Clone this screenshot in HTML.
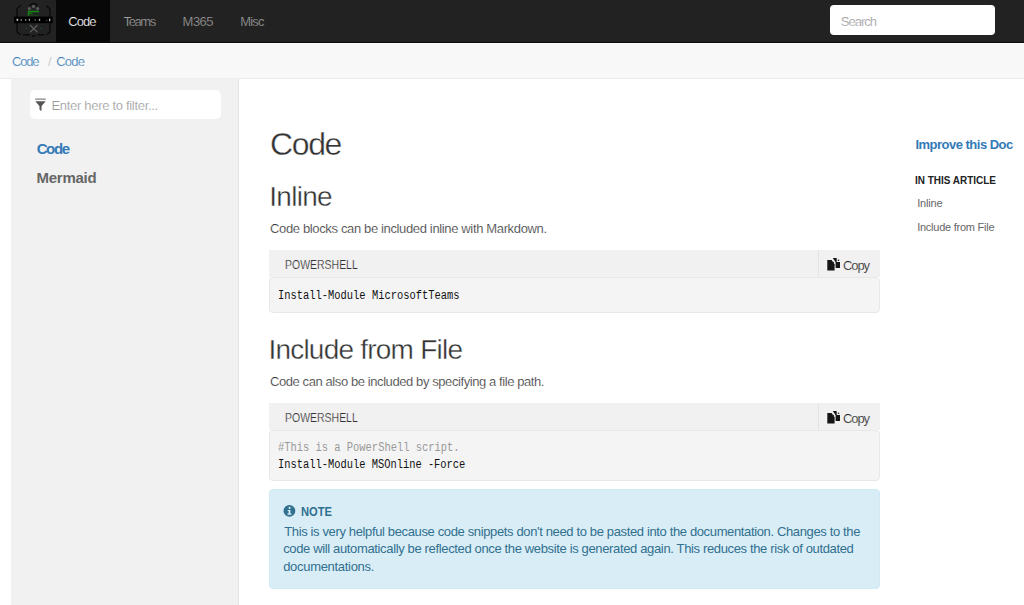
<!DOCTYPE html>
<html><head><meta charset="utf-8"><title>Code</title>
<style>
*{margin:0;padding:0;box-sizing:border-box}
html,body{width:1024px;height:605px;overflow:hidden;background:#fff;font-family:"Liberation Sans",sans-serif;color:#333}
.t{position:absolute;white-space:nowrap;line-height:1}
#nav{position:absolute;left:0;top:0;width:1024px;height:43px;background:#222;border-bottom:1px solid #080808}
#active{position:absolute;left:56px;top:0;width:54px;height:42px;background:#080808}
#search{position:absolute;left:830px;top:5px;width:165px;height:30px;background:#fff;border-radius:4px}
#crumb{position:absolute;left:0;top:44px;width:1024px;height:34px;background:#f8f8f8}
#side{position:absolute;left:11px;top:78px;width:228px;height:527px;background:#f1f1f1;border-right:1px solid #e4e4e4}
#filter{position:absolute;left:30px;top:90px;width:191px;height:29px;background:#fff;border-radius:5px}
.ch{position:absolute;left:269px;width:611px;height:27px;background:#f1f1f1}
.cpsep{position:absolute;left:818px;width:1px;height:27px;background:#e4e4e4}
.pre{position:absolute;left:269px;width:611px;background:#f4f4f4;border:1px solid #e8e8e8;border-radius:4px}
#alert{position:absolute;left:269px;top:489px;width:611px;height:100px;background:#d9edf7;border:1px solid #cfeaf4;border-radius:4px}
</style></head>
<body>
<div id="nav">
  <div id="active"></div>
</div>
<svg style="position:absolute;left:10px;top:0" width="48" height="42" viewBox="0 0 48 42">
  <path d="M10.7 5.2 L7 9 L7 30.5 Q7 33.5 10.7 34.3 M36.3 5.5 L40 9 L40 30.5 Q40 33.5 36.5 34.3" stroke="#0b0b0b" stroke-width="1.4" fill="none"/>
  <path d="M13 34.8 L20 34.8 M27.5 34.8 L34.5 34.8 M22 36 L25 36" stroke="#0b0b0b" stroke-width="1.4" fill="none"/>
  <path d="M19.5 5.8 Q23.5 1.2 27.5 5.8" stroke="#0b0b0b" stroke-width="1.4" fill="none"/>
  <circle cx="19.4" cy="8.6" r="1.6" fill="#5a5a5a"/><circle cx="23.5" cy="6.4" r="1.6" fill="#5a5a5a"/><circle cx="27.6" cy="8.6" r="1.6" fill="#5a5a5a"/>
  <path d="M18.5 16 L18.5 11.5 L29 11.5" stroke="#158a15" stroke-width="1.3" fill="none"/>
  <path d="M18.5 13.4 L22.5 13.4" stroke="#137a13" stroke-width="1.1" fill="none"/>
  <path d="M18.5 15.3 L29 15.3" stroke="#1d4d1d" stroke-width="0.9" fill="none"/>
  <rect x="4.1" y="16.6" width="38.5" height="6.6" fill="#000"/>
  <rect x="6.6" y="18.8" width="1.6" height="2" fill="#ccc"/>
  <rect x="10.6" y="19" width="1.4" height="1.8" fill="#777"/>
  <rect x="14.9" y="19" width="1.4" height="1.8" fill="#777"/>
  <rect x="18.8" y="18.8" width="1.2" height="2" fill="#aaa"/>
  <rect x="24.6" y="19" width="1.2" height="1.8" fill="#666"/>
  <rect x="28.8" y="18.8" width="1.4" height="2" fill="#aaa"/>
  <rect x="36" y="20" width="1.2" height="1" fill="#555"/>
  <rect x="39.1" y="18.6" width="1.2" height="2.6" fill="#ccc"/>
  <path d="M20 25 L27.5 32.4 M27.5 25 L20 32.4" stroke="#5f5f5f" stroke-width="1.2"/>
  <path d="M15.8 28.5 L17.2 28.5 M30.3 28.5 L31.7 28.5" stroke="#1d5a1d" stroke-width="0.9"/>
</svg>
<div id="search"></div>
<div id="crumb"></div>
<div id="side"></div>
<div style="position:absolute;left:0;top:78px;width:1024px;height:1px;background:#ededed"></div>
<div id="filter"></div>
<svg style="position:absolute;left:35px;top:98px" width="11" height="14" viewBox="0 0 11 14">
  <rect x="0.2" y="0.6" width="10.6" height="1" fill="#666"/>
  <path d="M0.3 3.2 L10.7 3.2 L6.6 8 L6.4 13.2 L4.6 11.8 L4.4 8 Z" fill="#555"/>
</svg>
<div class="ch" style="top:250px"></div>
<div class="cpsep" style="top:250px"></div>
<svg style="position:absolute;left:824px;top:254px" width="20" height="20" viewBox="0 0 20 20">
  <path d="M3.3 6 L7.6 6 L10.6 10.2 L10.6 16.5 L3.3 16.5 Z" fill="#151515"/>
  <path d="M8.8 4 L12.7 4 L12.7 8 L16 8 L16 14 L11.6 14 L11.6 8.3 Z" fill="#151515"/>
  <circle cx="9.4" cy="8.4" r="0.7" fill="#333"/>
  <circle cx="14.5" cy="6.3" r="0.8" fill="#151515"/>
</svg>
<div class="pre" style="top:277px;height:36px"></div>
<div class="ch" style="top:403px"></div>
<div class="cpsep" style="top:403px"></div>
<svg style="position:absolute;left:824px;top:407px" width="20" height="20" viewBox="0 0 20 20">
  <path d="M3.3 6 L7.6 6 L10.6 10.2 L10.6 16.5 L3.3 16.5 Z" fill="#151515"/>
  <path d="M8.8 4 L12.7 4 L12.7 8 L16 8 L16 14 L11.6 14 L11.6 8.3 Z" fill="#151515"/>
  <circle cx="9.4" cy="8.4" r="0.7" fill="#333"/>
  <circle cx="14.5" cy="6.3" r="0.8" fill="#151515"/>
</svg>
<div class="pre" style="top:430px;height:51px"></div>
<div id="alert"></div>
<svg style="position:absolute;left:283px;top:505px" width="13" height="13" viewBox="0 0 13 13">
  <circle cx="6.4" cy="5.9" r="5.9" fill="#31708f"/>
  <circle cx="6.6" cy="2.9" r="1.05" fill="#d9edf7"/>
  <path d="M4.7 5 L7.4 5 L7.4 8.6 L8.4 8.6 L8.4 9.8 L4.5 9.8 L4.5 8.6 L5.6 8.6 L5.6 6.1 L4.7 6.1 Z" fill="#d9edf7"/>
</svg>
<div class="t" id="navcode" style="left:68.20px;top:15px;font-size:13px;color:#fff;letter-spacing:-0.933px;-webkit-text-stroke:0.2px #080808">Code</div>
<div class="t" id="teams" style="left:123.50px;top:15px;font-size:13px;color:#9d9d9d;letter-spacing:-1.375px;-webkit-text-stroke:0.2px #222">Teams</div>
<div class="t" id="m365" style="left:182.60px;top:15px;font-size:13px;color:#9d9d9d;letter-spacing:-0.533px;-webkit-text-stroke:0.2px #222">M365</div>
<div class="t" id="misc" style="left:240.30px;top:15px;font-size:13px;color:#9d9d9d;letter-spacing:-0.867px;-webkit-text-stroke:0.2px #222">Misc</div>
<div class="t" id="srch" style="left:840.70px;top:15px;font-size:13px;color:#999;letter-spacing:-0.980px;-webkit-text-stroke:0.2px #fff">Search</div>
<div class="t" id="cr1" style="left:12.00px;top:55px;font-size:13px;color:#337ab7;letter-spacing:-1.233px;-webkit-text-stroke:0.2px #f8f8f8">Code</div>
<div class="t" id="crs" style="left:48.00px;top:55px;font-size:13px;color:#ccc;letter-spacing:0.000px">/</div>
<div class="t" id="cr2" style="left:56.20px;top:55px;font-size:13px;color:#337ab7;letter-spacing:-0.733px;-webkit-text-stroke:0.2px #f8f8f8">Code</div>
<div class="t" id="filt" style="left:51.40px;top:99px;font-size:13px;color:#999;letter-spacing:-0.300px;-webkit-text-stroke:0.2px #fff">Enter here to filter...</div>
<div class="t" id="sc" style="left:36.70px;top:141px;font-size:15px;color:#337ab7;letter-spacing:-1.400px;font-weight:bold">Code</div>
<div class="t" id="sm" style="left:36.50px;top:170px;font-size:15px;color:#666;letter-spacing:-0.250px;font-weight:bold">Mermaid</div>
<div class="t" id="h1" style="left:270.10px;top:128px;font-size:32px;color:#333;letter-spacing:-1.433px;-webkit-text-stroke:0.35px #fff">Code</div>
<div class="t" id="h2a" style="left:269.30px;top:183px;font-size:28px;color:#333;letter-spacing:-0.740px;-webkit-text-stroke:0.35px #fff">Inline</div>
<div class="t" id="p1" style="left:270.00px;top:222px;font-size:13px;color:#333;letter-spacing:-0.356px;-webkit-text-stroke:0.2px #fff">Code blocks can be included inline with Markdown.</div>
<div class="t" id="ps1" style="left:285.20px;top:258px;font-size:13px;color:#333;letter-spacing:0.000px;-webkit-text-stroke:0.2px #f1f1f1;transform:scaleX(0.8058);transform-origin:0 0">POWERSHELL</div>
<div class="t" id="cp1" style="left:843.00px;top:259px;font-size:13px;color:#222;letter-spacing:-1.100px;-webkit-text-stroke:0.2px #f1f1f1">Copy</div>
<div class="t" id="c1" style="left:278.20px;top:290px;font-size:12px;color:#111;letter-spacing:0.000px;transform:scaleX(0.8691);transform-origin:0 0;font-family:'Liberation Mono',monospace">Install-Module MicrosoftTeams</div>
<div class="t" id="h2b" style="left:268.40px;top:336px;font-size:28px;color:#333;letter-spacing:-0.775px;-webkit-text-stroke:0.35px #fff">Include from File</div>
<div class="t" id="p2" style="left:270.00px;top:375px;font-size:13px;color:#333;letter-spacing:-0.414px;-webkit-text-stroke:0.2px #fff">Code can also be included by specifying a file path.</div>
<div class="t" id="ps2" style="left:285.20px;top:411px;font-size:13px;color:#333;letter-spacing:0.000px;-webkit-text-stroke:0.2px #f1f1f1;transform:scaleX(0.8058);transform-origin:0 0">POWERSHELL</div>
<div class="t" id="cp2" style="left:843.00px;top:412px;font-size:13px;color:#222;letter-spacing:-1.100px;-webkit-text-stroke:0.2px #f1f1f1">Copy</div>
<div class="t" id="c2a" style="left:278.40px;top:442px;font-size:12px;color:#999;letter-spacing:0.000px;transform:scaleX(0.8690);transform-origin:0 0;font-family:'Liberation Mono',monospace">#This is a PowerShell script.</div>
<div class="t" id="c2b" style="left:278.20px;top:459px;font-size:12px;color:#111;letter-spacing:0.000px;transform:scaleX(0.8672);transform-origin:0 0;font-family:'Liberation Mono',monospace">Install-Module MSOnline -Force</div>
<div class="t" id="note" style="left:301.10px;top:505px;font-size:13px;color:#31708f;letter-spacing:0.000px;font-weight:bold;transform:scaleX(0.8583);transform-origin:0 0">NOTE</div>
<div class="t" id="al1" style="left:284.20px;top:525px;font-size:13px;color:#31708f;letter-spacing:-0.362px">This is very helpful because code snippets don't need to be pasted into the documentation. Changes to the</div>
<div class="t" id="al2" style="left:283.20px;top:542px;font-size:13px;color:#31708f;letter-spacing:-0.355px">code will automatically be reflected once the website is generated again. This reduces the risk of outdated</div>
<div class="t" id="al3" style="left:283.20px;top:560px;font-size:13px;color:#31708f;letter-spacing:-0.307px">documentations.</div>
<div class="t" id="imp" style="left:915.40px;top:138px;font-size:13px;color:#337ab7;letter-spacing:-0.507px;font-weight:bold">Improve this Doc</div>
<div class="t" id="ita" style="left:915.40px;top:175px;font-size:11px;color:#222;letter-spacing:0.000px;font-weight:bold;transform:scaleX(0.9044);transform-origin:0 0">IN THIS ARTICLE</div>
<div class="t" id="ti" style="left:917.20px;top:198px;font-size:11px;color:#666;letter-spacing:-0.160px">Inline</div>
<div class="t" id="tf" style="left:917.20px;top:222px;font-size:11px;color:#666;letter-spacing:-0.250px">Include from File</div>
</body></html>
